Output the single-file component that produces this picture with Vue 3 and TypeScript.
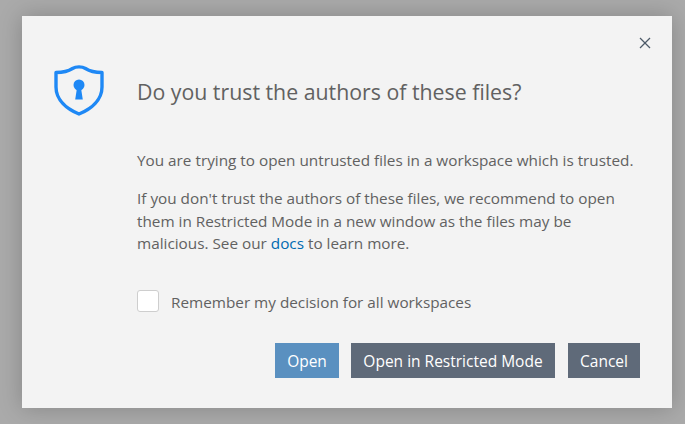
<script setup lang="ts">
const title = 'Do you trust the authors of these files?'
</script>

<template>
  <div class="backdrop">
    <div class="dialog">
      <div class="close-row">
        <button class="close-btn" aria-label="Close">
          <svg width="12" height="12" viewBox="0 0 12 12" fill="none" stroke="#4d5a68" stroke-width="1.2">
            <line x1="1" y1="1" x2="11" y2="11" />
            <line x1="11" y1="1" x2="1" y2="11" />
          </svg>
        </button>
      </div>
      <div class="header">
        <svg class="shield" width="50" height="52" viewBox="0 0 50 52" fill="none">
          <path
            d="M2 8.500C9 8.500 14 7.500 18.500 4.500C22 2.300 28 2.300 31.500 4.500C36 7.500 41 8.500 48 8.500V23C48 36 37 45 25 50C13 45 2 36 2 23Z"
            stroke="#1e88f5"
            stroke-width="3.400"
            stroke-linejoin="round"
          />
          <circle cx="25" cy="21" r="5.500" fill="#1e88f5" />
          <path d="M23 24H27L28.800 35.500H21.200Z" fill="#1e88f5" />
        </svg>
        <h1 class="title">{{ title }}</h1>
      </div>
      <div class="content">
        <p class="first">You are trying to open untrusted files in a workspace which is trusted.</p>
        <p class="second">
          If you don't trust the authors of these files, we recommend to open them in Restricted Mode in a new window as the files may be malicious. See our
          <a href="#">docs</a> to learn more.
        </p>
        <label class="remember">
          <span class="checkbox"></span>
          <span class="remember-text">Remember my decision for all workspaces</span>
        </label>
      </div>
      <div class="actions">
        <button class="btn primary">Open</button>
        <button class="btn restricted">Open in Restricted Mode</button>
        <button class="btn cancel">Cancel</button>
      </div>
    </div>
  </div>
</template>

<style>
html,
body {
  margin: 0;
  background: #aaaaaa;
}
</style>

<style scoped>
.backdrop {
  width: 685px;
  height: 424px;
  padding: 16px 0 0 22px;
  box-sizing: border-box;
  overflow: hidden;
  background: #aaaaaa;
  font-family: "Open Sans", "Noto Sans", sans-serif;
}

.dialog {
  width: 650px;
  height: 392px;
  box-sizing: border-box;
  background: #f3f3f3;
  box-shadow: 0 0 22px rgba(0, 0, 0, 0.22);
  color: #616161;
  display: flex;
  flex-direction: column;
}

.close-row {
  display: flex;
  justify-content: flex-end;
  padding: 21px 21px 0 0;
  height: 12px;
}

.close-btn {
  width: 12px;
  height: 12px;
  padding: 0;
  border: 0;
  background: none;
  display: block;
}

.close-btn svg {
  display: block;
}

.header {
  display: flex;
  align-items: center;
  padding: 15px 0 0 32px;
}

.shield {
  display: block;
  flex: none;
}

.title {
  margin: 3px 0 0 33px;
  font-size: 21.300px;
  font-weight: 400;
  line-height: 27px;
}

.content {
  width: 505px;
  margin-left: 115px;
  padding-top: 33px;
  font-size: 15.300px;
  line-height: 22.400px;
}

.content p {
  margin: 0;
}

.second {
  margin-top: 16px !important;
}

a {
  color: #006ab1;
  text-decoration: none;
}

.remember {
  display: flex;
  align-items: center;
  gap: 12px;
  margin-top: 35px;
}

.remember-text {
  padding-top: 2px;
  line-height: 20px;
}

.checkbox {
  width: 20px;
  height: 20px;
  flex: none;
  background: #fff;
  border: 1px solid #cecece;
  border-radius: 3px;
}

.actions {
  display: flex;
  justify-content: flex-end;
  gap: 12px;
  margin-top: 31px;
  padding-right: 32px;
}

.btn {
  height: 35px;
  padding: 2px 0 0;
  border: 0;
  color: #fff;
  font-family: inherit;
  font-size: 15.500px;
}

.primary {
  width: 64px;
  background: #5a90c0;
}

.restricted {
  width: 204px;
  background: #5f6a79;
}

.cancel {
  width: 72px;
  margin-left: 1px;
  background: #5f6a79;
}
</style>
